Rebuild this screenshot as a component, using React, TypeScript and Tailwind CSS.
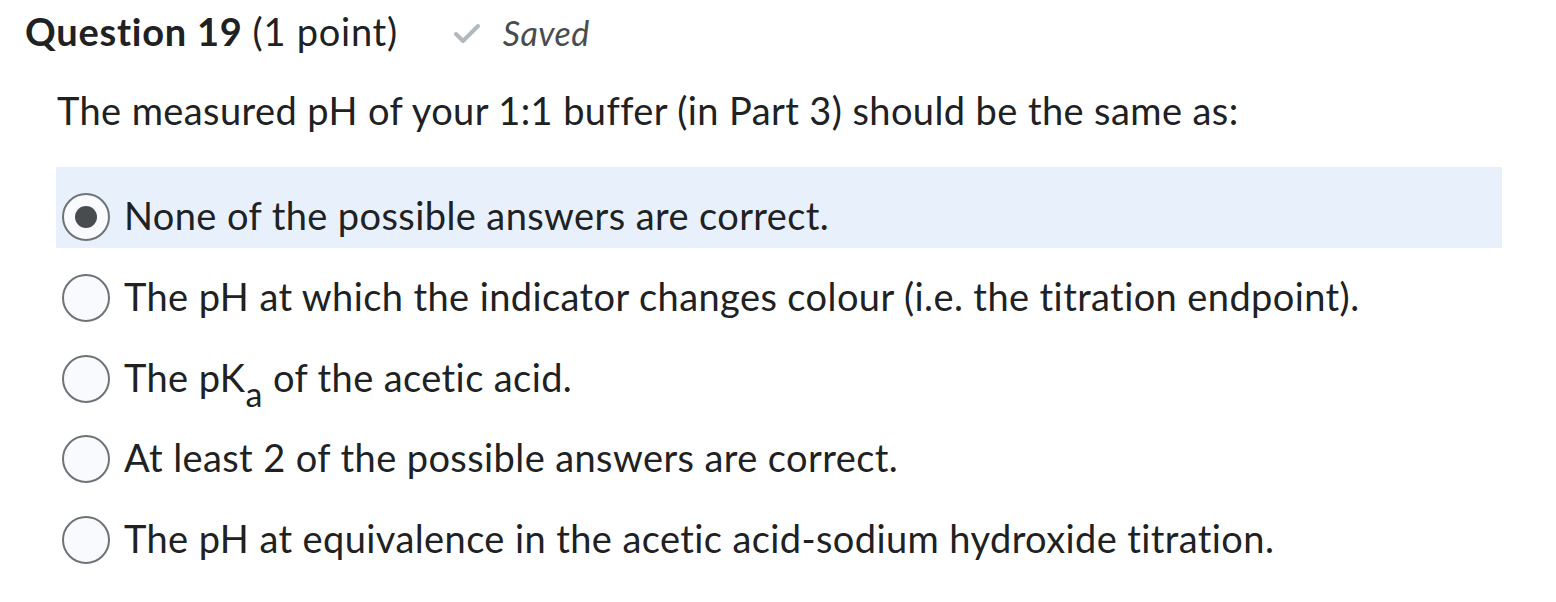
import React from "react";

function Radio({ checked }: { checked?: boolean }) {
  return (
    <span className="flex h-[48px] w-[48px] shrink-0 items-center justify-center rounded-full border-2 border-[#6e7376] bg-[#f9fafe]">
      {checked && <span className="h-[22px] w-[22px] rounded-full bg-[#494c4e]" />}
    </span>
  );
}

function Option({ checked, children }: { checked?: boolean; children: React.ReactNode }) {
  return (
    <div className={`flex h-[80.75px] items-start gap-[14px] pl-[6px] pt-[26px] ${checked ? "bg-[#e8f1fb]" : ""}`}>
      <Radio checked={checked} />
      <span className="leading-[44px] tracking-[0.4px]">{children}</span>
    </div>
  );
}

export default function App() {
  return (
    <div
      className="min-h-[602px] w-[1556px] bg-white text-[#202122] [font-variant-ligatures:none]"
      style={{ fontFamily: "Lato, 'Noto Sans', sans-serif" }}
    >
      <div className="flex items-baseline pl-[25px] pt-[9px] text-[38px] leading-[44px] tracking-[0.75px]">
        <span className="font-bold">Question 19</span>
        <span className="ml-[10px]">(1 point)</span>
        <svg width="28" height="22" viewBox="0 0 28 22" className="ml-[55px] self-start mt-[13px]">
          <path d="M3 12 L10 19 L25 4" fill="none" stroke="#b1b9bd" strokeWidth="4" strokeLinecap="round" strokeLinejoin="round" />
        </svg>
        <span className="ml-[22px] text-[34px] italic text-[#494c4e] tracking-[0.4px]">Saved</span>
      </div>
      <div className="pl-[57px] pt-[33px] text-[38px] leading-[44px] tracking-[0.4px]">
        The measured pH of your 1:1 buffer (in Part 3) should be the same as:
      </div>
      <div className="mt-[35px] ml-[56px] w-[1446px] text-[38px]">
        <div className="flex flex-col">
          <Option checked>None of the possible answers are correct.</Option>
          <Option>The pH at which the indicator changes colour (i.e. the titration endpoint).</Option>
          <Option>
            The pK<sub className="text-[34px] leading-none align-[-7px]">a</sub> of the acetic acid.
          </Option>
          <Option>At least 2 of the possible answers are correct.</Option>
          <Option>The pH at equivalence in the acetic acid-sodium hydroxide titration.</Option>
        </div>
      </div>
    </div>
  );
}
